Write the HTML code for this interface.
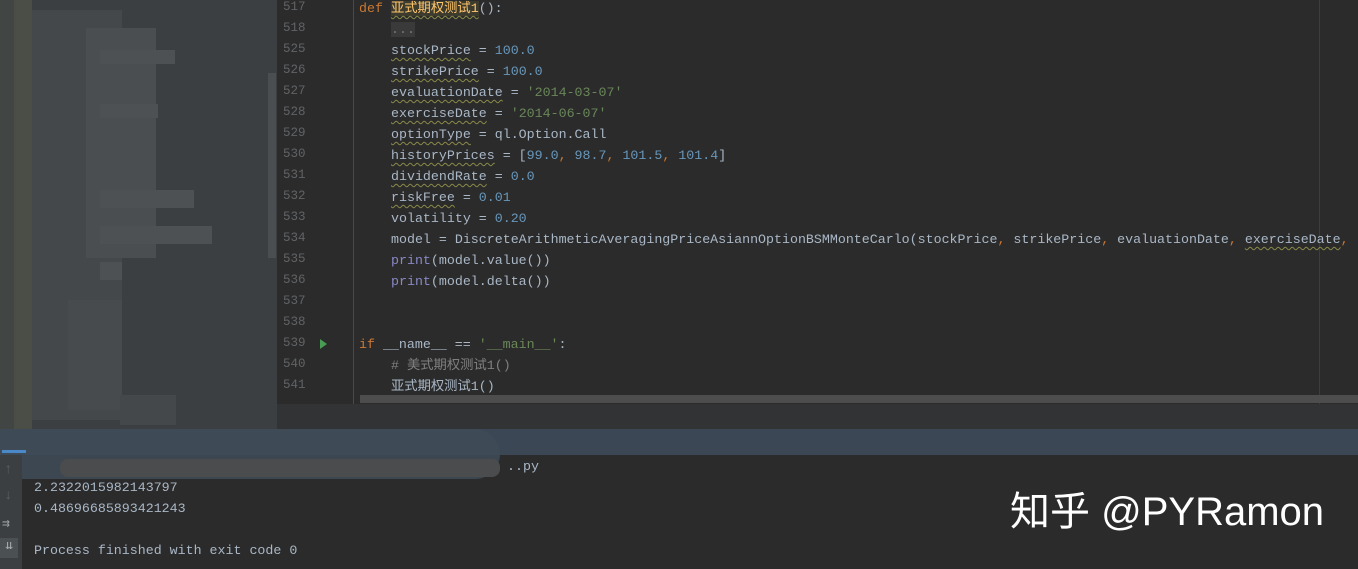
<!DOCTYPE html>
<html><head><meta charset="utf-8"><style>
*{margin:0;padding:0;box-sizing:border-box}
body{width:1358px;height:569px;overflow:hidden;background:#2b2b2b;position:relative;font-family:"Liberation Mono","Noto Sans CJK SC",monospace;font-size:13.3px;color:#a9b7c6}
.a{position:absolute}
.ln{position:absolute;left:283px;width:24px;color:#606366;font-size:12.5px}
.cl{position:absolute;white-space:pre;height:21px;line-height:21px}
.k{color:#cc7832}.n{color:#6897bb}.s{color:#6a8759}.p{color:#8888c6}.c{color:#808080}
.u{text-decoration:underline wavy #8a8a4a;text-decoration-thickness:1px;text-underline-offset:3px}
.f{color:#ffc66d;background:#3d3b2d}
</style></head><body>
<div class="a" style="left:0;top:0;width:277px;height:430px;background:#3c3f41"></div>
<div class="a" style="left:0;top:0;width:14px;height:430px;background:#414543"></div>
<div class="a" style="left:14px;top:0;width:18px;height:430px;background:#4a4e47"></div>
<div class="a" style="left:32px;top:10px;width:90px;height:410px;background:#45484a"></div>
<div class="a" style="left:86px;top:28px;width:70px;height:230px;background:#4b4e50"></div>
<div class="a" style="left:100px;top:50px;width:75px;height:14px;background:#4e5153"></div>
<div class="a" style="left:100px;top:104px;width:58px;height:14px;background:#4e5153"></div>
<div class="a" style="left:100px;top:190px;width:94px;height:18px;background:#4e5153"></div>
<div class="a" style="left:100px;top:226px;width:112px;height:18px;background:#4e5153"></div>
<div class="a" style="left:100px;top:262px;width:22px;height:18px;background:#4e5153"></div>
<div class="a" style="left:68px;top:300px;width:54px;height:110px;background:#484b4d"></div>
<div class="a" style="left:120px;top:395px;width:56px;height:30px;background:#45484a"></div>
<div class="a" style="left:268px;top:73px;width:8px;height:185px;background:#4b4e50"></div>
<div class="a" style="left:277px;top:0;width:1081px;height:405px;background:#2b2b2b"></div>
<div class="a" style="left:353px;top:0;width:1px;height:405px;background:#4a4a4a"></div>
<div class="a" style="left:1319px;top:0;width:1px;height:405px;background:#3d3d3d"></div>
<div class="a" style="left:360px;top:395px;width:998px;height:8px;background:#4d4d4d"></div>
<div class="a" style="left:277px;top:404px;width:1081px;height:25px;background:#313335"></div>
<div class="a" style="left:0;top:429px;width:1358px;height:26px;background:#3b4754"></div>
<div class="a" style="left:0;top:429px;width:500px;height:50px;background:#3f4a55;border-radius:0 30px 30px 0;opacity:.9"></div>
<div class="a" style="left:2px;top:450px;width:24px;height:3px;background:#4a88c7"></div>
<div class="a" style="left:0;top:455px;width:22px;height:114px;background:#3c3f41"></div>
<div class="a" style="left:60px;top:459px;width:440px;height:18px;background:#4a4c4e;border-radius:8px"></div>
<div class="a" style="left:4px;top:462px;color:#5c6164;font-size:14px">↑</div>
<div class="a" style="left:4px;top:488px;color:#5c6164;font-size:14px">↓</div>
<div class="a" style="left:2px;top:516px;color:#9aa0a4;font-size:13px">⇉</div>
<div class="a" style="left:0;top:538px;width:18px;height:20px;background:#4b5052;color:#a6abaf;font-size:13px;text-align:center">⇊</div>

<div class="ln" style="top:0px">517</div><div class="ln" style="top:21px">518</div><div class="ln" style="top:42px">525</div><div class="ln" style="top:63px">526</div><div class="ln" style="top:84px">527</div><div class="ln" style="top:105px">528</div><div class="ln" style="top:126px">529</div><div class="ln" style="top:147px">530</div><div class="ln" style="top:168px">531</div><div class="ln" style="top:189px">532</div><div class="ln" style="top:210px">533</div><div class="ln" style="top:231px">534</div><div class="ln" style="top:252px">535</div><div class="ln" style="top:273px">536</div><div class="ln" style="top:294px">537</div><div class="ln" style="top:315px">538</div><div class="ln" style="top:336px">539</div><div class="ln" style="top:357px">540</div><div class="ln" style="top:378px">541</div>
<svg class="a" style="left:318px;top:338px" width="10" height="12"><path d="M2 1L9 6L2 11Z" fill="#499c54"/></svg>

<div class="cl" style="left:359px;top:-2px"><span class="k">def</span> <span class="f u">亚式期权测试1</span>():</div>
<div class="cl" style="left:391px;top:19px"><span style="background:#3a3a3a;color:#777">...</span></div>
<div class="cl" style="left:391px;top:40px"><span class="u">stockPrice</span> = <span class="n">100.0</span></div>
<div class="cl" style="left:391px;top:61px"><span class="u">strikePrice</span> = <span class="n">100.0</span></div>
<div class="cl" style="left:391px;top:82px"><span class="u">evaluationDate</span> = <span class="s">'2014-03-07'</span></div>
<div class="cl" style="left:391px;top:103px"><span class="u">exerciseDate</span> = <span class="s">'2014-06-07'</span></div>
<div class="cl" style="left:391px;top:124px"><span class="u">optionType</span> = ql.Option.Call</div>
<div class="cl" style="left:391px;top:145px"><span class="u">historyPrices</span> = [<span class="n">99.0</span><span class="k">,</span> <span class="n">98.7</span><span class="k">,</span> <span class="n">101.5</span><span class="k">,</span> <span class="n">101.4</span>]</div>
<div class="cl" style="left:391px;top:166px"><span class="u">dividendRate</span> = <span class="n">0.0</span></div>
<div class="cl" style="left:391px;top:187px"><span class="u">riskFree</span> = <span class="n">0.01</span></div>
<div class="cl" style="left:391px;top:208px">volatility = <span class="n">0.20</span></div>
<div class="cl" style="left:391px;top:229px">model = DiscreteArithmeticAveragingPriceAsiannOptionBSMMonteCarlo(stockPrice<span class="k">,</span> strikePrice<span class="k">,</span> evaluationDate<span class="k">,</span> <span class="u">exerciseDate</span><span class="k">,</span></div>
<div class="cl" style="left:391px;top:250px"><span class="p">print</span>(model.value())</div>
<div class="cl" style="left:391px;top:271px"><span class="p">print</span>(model.delta())</div>
<div class="cl" style="left:359px;top:334px"><span class="k">if</span> __name__ == <span class="s">'__main__'</span>:</div>
<div class="cl" style="left:391px;top:355px"><span class="c"># 美式期权测试1()</span></div>
<div class="cl" style="left:391px;top:376px">亚式期权测试1()</div>

<div class="cl" style="left:507px;top:456px">..py</div>
<div class="cl" style="left:34px;top:477px">2.2322015982143797</div>
<div class="cl" style="left:34px;top:498px">0.48696685893421243</div>
<div class="cl" style="left:34px;top:540px">Process finished with exit code 0</div>
<div class="a" style="left:1010px;top:487px;color:#fff;font-family:'Liberation Sans','Noto Sans CJK SC',sans-serif;font-size:40px;line-height:50px;white-space:nowrap">知乎 @PYRamon</div>
</body></html>
